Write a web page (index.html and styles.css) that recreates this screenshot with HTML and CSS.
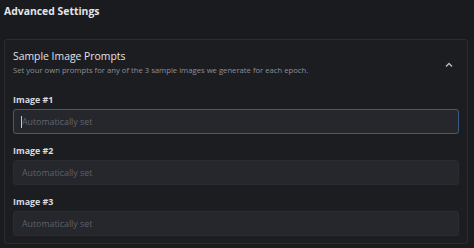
FILE: index.html
```html
<!DOCTYPE html>
<html>
<head>
<meta charset="utf-8">
<link rel="stylesheet" href="styles.css">
</head>
<body>
<div class="page">
  <h2 class="title">Advanced Settings</h2>
  <section class="card">
    <div class="card-head">
      <div class="card-text">
        <h3 class="card-title">Sample Image Prompts</h3>
        <p class="card-sub">Set your own prompts for any of the 3 sample images we generate for each epoch.</p>
      </div>
      <svg class="chev" width="8" height="6" viewBox="0 0 8 6"><path d="M1 4.5 L4 1.5 L7 4.5" fill="none" stroke="#b8bcc4" stroke-width="1.4"/></svg>
    </div>
    <div class="field">
      <label class="label">Image #1</label>
      <div class="input focus"><span class="caret"></span>Automatically set</div>
    </div>
    <div class="field">
      <label class="label">Image #2</label>
      <div class="input">Automatically set</div>
    </div>
    <div class="field">
      <label class="label">Image #3</label>
      <div class="input">Automatically set</div>
    </div>
  </section>
</div>
</body>
</html>
```
FILE: styles.css
```css
html, body { margin: 0; padding: 0; background: #1a1b1f; }
body { font-family: "Open Sans", "Noto Sans", sans-serif; color: #e6e7ea; }
.page { padding: 2px 4px 0 4px; }
.title { margin: 0; font-size: 10.4px; font-weight: 700; line-height: 19px; color: #e4e5e8; }
.card { margin-top: 18px; border: 1px solid #2b2d33; border-radius: 3px; background: #1c1d21; padding: 0 8px 7px 8px; width: 446px; }
.card-head { display: flex; align-items: center; justify-content: space-between; padding: 9px 0 17px 0; }
.card-title { margin: 0; font-size: 10.4px; font-weight: 400; line-height: 15px; color: #e2e3e6; }
.card-sub { margin: 0; font-size: 7.7px; line-height: 12px; color: #8d9099; }
.chev { margin-right: 6px; margin-top: 4px; }
.field { margin-bottom: 10px; }
.field:last-child { margin-bottom: 0; }
.label { display: block; font-size: 8.9px; font-weight: 700; line-height: 13px; color: #d8dadf; margin-bottom: 3px; }
.input { box-sizing: border-box; height: 25px; border: 1px solid #2a2c32; border-radius: 3px; background: #26272d; font-size: 8.8px; color: #5d6069; padding-left: 8px; display: flex; align-items: center; }
.input.focus { border: 1.5px solid #3c5e86; color: #62656e; padding-left: 7px; }
.caret { display: inline-block; width: 1px; height: 12px; background: #c8cad0; margin-right: 0; }
```
